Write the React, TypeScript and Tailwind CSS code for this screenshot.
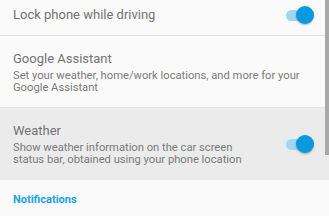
import React from "react";

function Toggle() {
  return (
    <div className="relative w-[28px] h-[18px] flex items-center">
      <div className="w-[24px] h-[11px] rounded-full bg-[#9fd6f2]" />
      <div className="absolute right-0 top-0 w-[18px] h-[18px] rounded-full bg-[#0a98df] shadow-[0_1px_2px_rgba(0,0,0,0.3)]" />
    </div>
  );
}

export default function App() {
  return (
    <div
      className="relative w-[329px] h-[216px] overflow-hidden bg-[#fafafa] flex flex-col"
      style={{ fontFamily: "Roboto, 'Noto Sans', sans-serif" }}
    >
      <div className="h-[36px] shrink-0 flex items-center justify-between pl-[13px] pr-[15px] pb-[5px] border-b border-[#e3e3e3]">
        <span className="text-[13px] text-[#737373]">Lock phone while driving</span>
        <Toggle />
      </div>
      <div className="h-[72px] shrink-0 flex flex-col justify-center pl-[13px] pr-[20px] pt-[2px] border-b border-[#e6e6e6]">
        <div className="text-[13px] leading-[16px] text-[#737373]">Google Assistant</div>
        <div className="text-[11.2px] leading-[12px] text-[#7a7a7a] mt-[3px]">
          Set your weather, home/work locations, and more for your Google Assistant
        </div>
      </div>
      <div className="h-[72px] shrink-0 flex items-center justify-between bg-[#ebebeb] pl-[13px] pr-[15px]">
        <div className="flex flex-col">
          <div className="text-[13px] leading-[16px] text-[#737373]">Weather</div>
          <div className="text-[11.2px] leading-[12px] text-[#7a7a7a] mt-[3px] w-[246px]">
            Show weather information on the car screen status bar, obtained using your phone location
          </div>
        </div>
        <Toggle />
      </div>
      <div className="flex-1 flex items-start pt-[13px] pl-[13px] bg-[#fafafa]">
        <span className="text-[11px] leading-[14px] font-bold text-[#15a4e6]">Notifications</span>
      </div>
      <div className="absolute right-0 top-0 w-[4px] h-[155px] bg-[#a8a8a8]" />
    </div>
  );
}
